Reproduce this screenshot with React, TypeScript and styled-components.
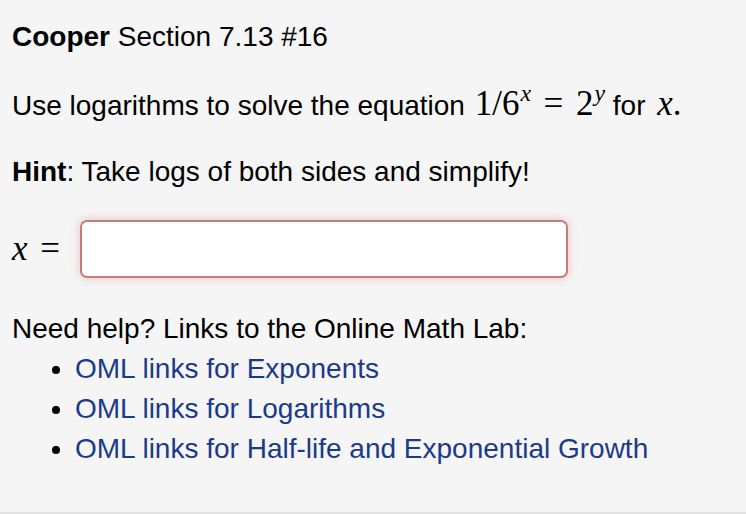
import React from "react";
import styled, { createGlobalStyle } from "styled-components";

const Global = createGlobalStyle`
  html, body { margin: 0; padding: 0; background: #f5f5f5; }
  body { font-family: "Liberation Sans", Arial, sans-serif; color: #000; }
`;

const Page = styled.div`
  box-sizing: border-box;
  width: 746px;
  height: 514px;
  padding: 17px 12px 0 12px;
  background: #f5f5f5;
  border-bottom: 2px solid #e2e2e2;
  font-size: 28px;
  line-height: 40px;
`;

const Para = styled.p<{ $mt?: number }>`
  margin: ${(p) => p.$mt ?? 0}px 0 0 0;
`;

const Math = styled.span<{ $lead?: number }>`
  font-family: "Liberation Serif", "Times New Roman", serif;
  font-size: 35px;
  margin-left: ${(p) => p.$lead ?? 0}px;
`;

const MI = styled.i`
  font-style: italic;
`;

const Sup = styled.sup`
  font-size: 0.68em;
  line-height: 0;
  vertical-align: 0.6em;
  padding-left: 1px;
`;

const Rel = styled.span`
  margin: 0 0.36em;
`;

const AnswerRow = styled.div`
  display: flex;
  align-items: center;
  gap: 20px;
  margin-top: 28px;
`;

const Label = styled.span`
  font-family: "Liberation Serif", "Times New Roman", serif;
  font-size: 35px;
  word-spacing: 4px;
`;

const Input = styled.input`
  box-sizing: border-box;
  width: 488px;
  height: 58px;
  border: 2px solid #c97b7b;
  border-radius: 7px;
  background: #fff;
  box-shadow: 0 0 10px rgba(200, 100, 100, 0.35);
  outline: none;
  font-size: 28px;
  padding: 0 12px;
`;

const List = styled.ul`
  margin: 0;
  padding-left: 63px;
`;

const Item = styled.li``;

const Link = styled.a`
  color: #1a3a8c;
  text-decoration: none;
`;

export default function App() {
  return (
    <>
      <Global />
      <Page>
        <Para>
          <b>Cooper</b> Section 7.13 #16
        </Para>
        <Para $mt={27}>
          Use logarithms to solve the equation{" "}
          <Math $lead={2}>
            1/6<Sup><MI>x</MI></Sup>
            <Rel>=</Rel>2<Sup><MI>y</MI></Sup>
          </Math>{" "}
          for <Math $lead={4}><MI>x</MI>.</Math>
        </Para>
        <Para $mt={26}>
          <b>Hint</b>: Take logs of both sides and simplify!
        </Para>
        <AnswerRow>
          <Label>
            <MI>x</MI> =
          </Label>
          <Input type="text" />
        </AnswerRow>
        <Para $mt={31}>Need help? Links to the Online Math Lab:</Para>
        <List>
          <Item><Link href="#">OML links for Exponents</Link></Item>
          <Item><Link href="#">OML links for Logarithms</Link></Item>
          <Item><Link href="#">OML links for Half-life and Exponential Growth</Link></Item>
        </List>
      </Page>
    </>
  );
}
